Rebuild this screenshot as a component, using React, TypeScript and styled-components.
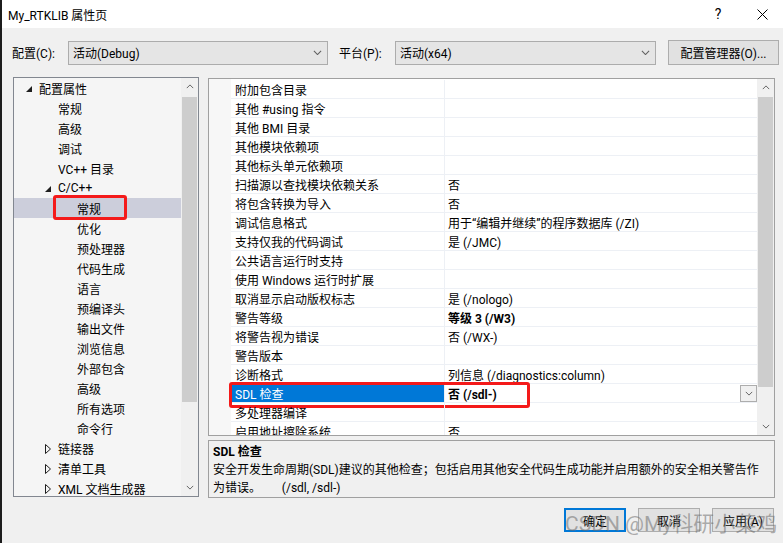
import styled, { createGlobalStyle } from "styled-components";

const GlobalStyle = createGlobalStyle`
  html, body {
    margin: 0;
    padding: 0;
    background: #f0f0f0;
  }
  body {
    font-family: Roboto, "Noto Sans CJK SC", sans-serif;
    font-size: 12px;
    color: #000;
  }
  * {
    box-sizing: border-box;
  }
`;

type TreeItem = {
  label: string;
  level: number;
  arrow?: "open" | "closed";
  selected?: boolean;
};

const treeItems: TreeItem[] = [
  { label: "配置属性", level: 0, arrow: "open" },
  { label: "常规", level: 1 },
  { label: "高级", level: 1 },
  { label: "调试", level: 1 },
  { label: "VC++ 目录", level: 1 },
  { label: "C/C++", level: 1, arrow: "open" },
  { label: "常规", level: 2, selected: true },
  { label: "优化", level: 2 },
  { label: "预处理器", level: 2 },
  { label: "代码生成", level: 2 },
  { label: "语言", level: 2 },
  { label: "预编译头", level: 2 },
  { label: "输出文件", level: 2 },
  { label: "浏览信息", level: 2 },
  { label: "外部包含", level: 2 },
  { label: "高级", level: 2 },
  { label: "所有选项", level: 2 },
  { label: "命令行", level: 2 },
  { label: "链接器", level: 1, arrow: "closed" },
  { label: "清单工具", level: 1, arrow: "closed" },
  { label: "XML 文档生成器", level: 1, arrow: "closed" },
];

type Prop = {
  name: string;
  value?: string;
  bold?: boolean;
  selected?: boolean;
};

const props: Prop[] = [
  { name: "附加包含目录" },
  { name: "其他 #using 指令" },
  { name: "其他 BMI 目录" },
  { name: "其他模块依赖项" },
  { name: "其他标头单元依赖项" },
  { name: "扫描源以查找模块依赖关系", value: "否" },
  { name: "将包含转换为导入", value: "否" },
  { name: "调试信息格式", value: "用于“编辑并继续”的程序数据库 (/ZI)" },
  { name: "支持仅我的代码调试", value: "是 (/JMC)" },
  { name: "公共语言运行时支持" },
  { name: "使用 Windows 运行时扩展" },
  { name: "取消显示启动版权标志", value: "是 (/nologo)" },
  { name: "警告等级", value: "等级 3 (/W3)", bold: true },
  { name: "将警告视为错误", value: "否 (/WX-)" },
  { name: "警告版本" },
  { name: "诊断格式", value: "列信息 (/diagnostics:column)" },
  { name: "SDL 检查", value: "否 (/sdl-)", bold: true, selected: true },
  { name: "多处理器编译" },
  { name: "启用地址擦除系统", value: "否" },
];

const Chevron = ({ up = false, size = 9 }: { up?: boolean; size?: number }) => (
  <svg width={size} height={size / 2 + 1} viewBox="0 0 10 6">
    <polyline
      points={up ? "1,5 5,1 9,5" : "1,1 5,5 9,1"}
      fill="none"
      stroke="#606060"
      strokeWidth="1.2"
    />
  </svg>
);

export default function App() {
  return (
    <>
      <GlobalStyle />
      <Window>
        <TitleBar>
          <TitleText>My_RTKLIB 属性页</TitleText>
          <TitleButton>?</TitleButton>
          <TitleButton>
            <svg width="11" height="11" viewBox="0 0 11 11">
              <path d="M0.5 0.5 L10.5 10.5 M10.5 0.5 L0.5 10.5" stroke="#000" strokeWidth="1" />
            </svg>
          </TitleButton>
        </TitleBar>

        <ConfigRow>
          <Label>配置(C):</Label>
          <Combo $width={260}>
            <span>活动(Debug)</span>
            <Chevron />
          </Combo>
          <Label $left={11}>平台(P):</Label>
          <Combo $width={261}>
            <span>活动(x64)</span>
            <Chevron />
          </Combo>
          <PushButton $width={111} $left={12}>配置管理器(O)...</PushButton>
        </ConfigRow>

        <Body>
          <Tree>
            <TreeList>
              {treeItems.map((item, i) => (
                <TreeRow key={i} $level={item.level} $selected={item.selected}>
                  <ArrowSlot>
                    {item.arrow === "open" && (
                      <svg width="6" height="6" viewBox="0 0 6 6">
                        <polygon points="6,0 6,6 0,6" fill="#1e1e1e" />
                      </svg>
                    )}
                    {item.arrow === "closed" && (
                      <svg width="6" height="10" viewBox="0 0 6 10">
                        <polygon points="0.5,0.5 5.5,5 0.5,9.5" fill="none" stroke="#1e1e1e" strokeWidth="1" />
                      </svg>
                    )}
                  </ArrowSlot>
                  <span>{item.label}</span>
                  {item.selected && <TreeMark />}
                </TreeRow>
              ))}
            </TreeList>
            <ScrollBar>
              <ScrollArrow>
                <Chevron up size={8} />
              </ScrollArrow>
              <Thumb $top={2} $height={305} />
              <ScrollTrack />
              <ScrollArrow>
                <Chevron size={8} />
              </ScrollArrow>
            </ScrollBar>
          </Tree>

          <RightColumn>
            <Grid>
              <GridRows>
                {props.map((p, i) => (
                  <GridRow key={i}>
                    <Gutter />
                    <NameCell $selected={p.selected}>{p.name}</NameCell>
                    <ValueCell $bold={p.bold}>
                      <span>{p.value}</span>
                      {p.selected && (
                        <DropButton>
                          <Chevron size={8} />
                        </DropButton>
                      )}
                    </ValueCell>
                    {p.selected && <RowMark />}
                  </GridRow>
                ))}
              </GridRows>
              <ScrollBar>
                <ScrollArrow>
                  <Chevron up size={8} />
                </ScrollArrow>
                <Thumb $top={1} $height={290} />
                <ScrollTrack />
                <ScrollArrow>
                  <Chevron size={8} />
                </ScrollArrow>
              </ScrollBar>
            </Grid>

            <Description>
              <DescTitle>SDL 检查</DescTitle>
              <DescText>
                安全开发生命周期(SDL)建议的其他检查；包括启用其他安全代码生成功能并启用额外的安全相关警告作
                <br />
                为错误。&nbsp;&nbsp;&nbsp;&nbsp;&nbsp;&nbsp;&nbsp;(/sdl, /sdl-)
              </DescText>
            </Description>
          </RightColumn>
        </Body>

        <ButtonRow>
          <PushButton $width={62} $default>确定</PushButton>
          <PushButton $width={62}>取消</PushButton>
          <PushButton $width={62}>应用(A)</PushButton>
        </ButtonRow>

        <Watermark>CSDN @My科研小菜鸡</Watermark>
      </Window>
    </>
  );
}

const Window = styled.div`
  position: relative;
  width: 783px;
  height: 543px;
  background: #f0f0f0;
  border-left: 2px solid #1c1c1c;
  overflow: hidden;
  display: flex;
  flex-direction: column;
`;

const TitleBar = styled.div`
  height: 28px;
  background: #fff;
  display: flex;
  align-items: center;
  padding-left: 6px;
`;

const TitleText = styled.div`
  flex: 1;
  font-size: 12px;
`;

const TitleButton = styled.div`
  width: 46px;
  height: 28px;
  display: flex;
  align-items: center;
  justify-content: center;
  font-size: 14px;
  &:last-child {
    width: 42px;
  }
`;

const ConfigRow = styled.div`
  display: flex;
  align-items: center;
  height: 25px;
  margin-top: 12px;
  padding-left: 10px;
`;

const Label = styled.span<{ $left?: number }>`
  margin-left: ${(p) => p.$left ?? 0}px;
  width: 56px;
  flex-shrink: 0;
`;

const Combo = styled.div<{ $width: number }>`
  width: ${(p) => p.$width}px;
  height: 24px;
  border: 1px solid #acacac;
  background: #e5e5e5;
  display: flex;
  align-items: center;
  justify-content: space-between;
  padding: 0 5px 0 4px;
`;

const PushButton = styled.div<{ $width: number; $left?: number; $default?: boolean }>`
  width: ${(p) => p.$width}px;
  height: ${(p) => (p.$left ? 25 : 24)}px;
  margin-left: ${(p) => p.$left ?? 0}px;
  background: #e1e1e1;
  border: ${(p) => (p.$default ? "2px solid #0078d7" : "1px solid #adadad")};
  display: flex;
  align-items: center;
  justify-content: center;
`;

const Body = styled.div`
  display: flex;
  margin-top: 12px;
  padding-left: 11px;
  gap: 9px;
`;

const Tree = styled.div`
  width: 186px;
  height: 420px;
  border: 1px solid #828790;
  background: #f5f5f5;
  display: flex;
`;

const TreeList = styled.div`
  flex: 1;
  overflow: hidden;
`;

const TreeRow = styled.div<{ $level: number; $selected?: boolean }>`
  position: relative;
  height: 20px;
  display: flex;
  align-items: center;
  padding-left: ${(p) => 10 + p.$level * 19}px;
  background: ${(p) => (p.$selected ? "#cccedb" : "transparent")};
  white-space: nowrap;
`;

const ArrowSlot = styled.span`
  width: 15px;
  flex-shrink: 0;
  display: flex;
  align-items: center;
  padding-left: 2px;
  padding-top: 2px;
`;

const TreeMark = styled.div`
  position: absolute;
  left: 39px;
  top: -3px;
  width: 74px;
  height: 25px;
  border: 3px solid #f41a1a;
  border-radius: 3px;
`;

const ScrollBar = styled.div`
  width: 17px;
  flex-shrink: 0;
  background: #f0f0f0;
  display: flex;
  flex-direction: column;
  align-items: center;
`;

const ScrollArrow = styled.div`
  width: 17px;
  height: 17px;
  display: flex;
  align-items: center;
  justify-content: center;
`;

const Thumb = styled.div<{ $top: number; $height: number }>`
  width: 15px;
  margin-top: ${(p) => p.$top}px;
  height: ${(p) => p.$height}px;
  background: #cdcdcd;
`;

const ScrollTrack = styled.div`
  flex: 1;
`;

const RightColumn = styled.div`
  width: 567px;
  margin-top: 1px;
  display: flex;
  flex-direction: column;
`;

const Grid = styled.div`
  height: 358px;
  border: 1px solid #a0a0a0;
  background: #fff;
  display: flex;
`;

const GridRows = styled.div`
  flex: 1;
  padding-top: 1px;
  overflow: hidden;
  background: linear-gradient(to right, #f7f7f7 22px, #fff 22px);
`;

const GridRow = styled.div`
  position: relative;
  height: 19px;
  display: grid;
  grid-template-columns: 22px 214px 1fr;
`;

const Gutter = styled.div``;

const NameCell = styled.div<{ $selected?: boolean }>`
  display: flex;
  align-items: center;
  padding-left: 4px;
  border-right: 1px solid #edf0f5;
  border-bottom: 1px solid #edf0f5;
  background: ${(p) => (p.$selected ? "#0078d7" : "transparent")};
  color: ${(p) => (p.$selected ? "#fff" : "#000")};
  white-space: nowrap;
`;

const ValueCell = styled.div<{ $bold?: boolean }>`
  display: flex;
  align-items: center;
  justify-content: space-between;
  padding-left: 3px;
  border-bottom: 1px solid #edf0f5;
  font-weight: ${(p) => (p.$bold ? 700 : 400)};
  white-space: nowrap;
`;

const DropButton = styled.div`
  width: 17px;
  height: 17px;
  border: 1px solid #adadad;
  background: #f0f0f0;
  display: flex;
  align-items: center;
  justify-content: center;
`;

const RowMark = styled.div`
  position: absolute;
  left: 20px;
  top: -2px;
  width: 301px;
  height: 26px;
  border: 3px solid #f41a1a;
  border-radius: 3px;
`;

const Description = styled.div`
  height: 58px;
  margin-top: 4px;
  border: 1px solid #a0a0a0;
  padding: 2px 4px 0;
  line-height: 18px;
`;

const DescTitle = styled.div`
  font-weight: 700;
`;

const DescText = styled.div`
  white-space: nowrap;
`;

const ButtonRow = styled.div`
  display: flex;
  justify-content: flex-end;
  gap: 12px;
  margin-top: 10px;
  padding-right: 9px;
`;

const Watermark = styled.div`
  position: absolute;
  left: 563px;
  top: 507px;
  font-family: Roboto, "Noto Sans CJK SC", sans-serif;
  font-size: 21px;
  color: rgba(110, 110, 110, 0.55);
  white-space: nowrap;
  pointer-events: none;
`;
